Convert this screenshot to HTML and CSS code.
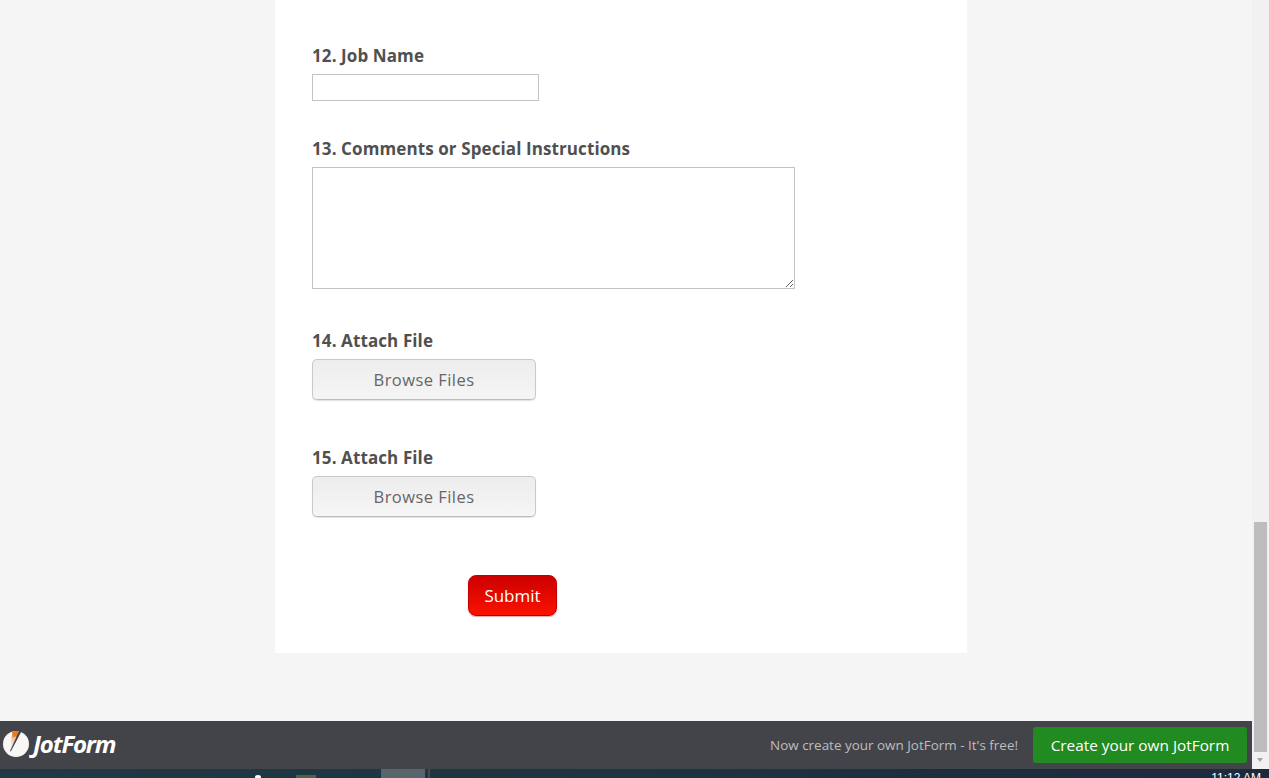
FILE: index.html
```html
<!DOCTYPE html>
<html lang="en">
<head>
<meta charset="utf-8">
<title>Form</title>
<link rel="stylesheet" href="styles.css">
</head>
<body>
<div class="window">
  <div class="viewport">
    <main class="page">
      <form class="card">
        <div class="field field-job">
          <label class="label">12. Job Name</label>
          <input class="text-input" type="text">
        </div>
        <div class="field field-comments">
          <label class="label">13. Comments or Special Instructions</label>
          <textarea class="textarea"></textarea>
        </div>
        <div class="field field-file">
          <label class="label">14. Attach File</label>
          <button class="browse" type="button">Browse Files</button>
        </div>
        <div class="field field-file2">
          <label class="label">15. Attach File</label>
          <button class="browse" type="button">Browse Files</button>
        </div>
        <div class="submit-row">
          <button class="submit" type="button">Submit</button>
        </div>
      </form>
    </main>
    <footer class="bar">
      <div class="brand">
        <svg class="logo" viewBox="0 0 28 28" width="28" height="28" aria-hidden="true">
          <defs>
            <linearGradient id="fade" x1="0.7" y1="0" x2="0.3" y2="1">
              <stop offset="0" stop-color="#e9b48a"/>
              <stop offset="0.6" stop-color="#efdfd2"/>
              <stop offset="1" stop-color="#f4efe9"/>
            </linearGradient>
          </defs>
          <circle cx="14" cy="14" r="13" fill="#f8f7f5"/>
          <path d="M16.500 6.500 L8.500 21 L9.500 6.500 Z" fill="url(#fade)"/>
          <path d="M10 1.500 C12 0.800 15 0.700 17 1.200 L15.500 7.800 L13 6.500 L10.500 7.800 Z" fill="#e8791c"/>
          <path d="M17.200 0.800 L19.500 1.300 L8.800 21.500 L8 21 Z" fill="#43444a"/>
        </svg>
        <span class="wordmark">JotForm</span>
      </div>
      <div class="promo">
        <span class="promo-text">Now create your own JotForm - It's free!</span>
        <a class="cta">Create your own JotForm</a>
      </div>
    </footer>
  </div>
  <div class="scrollbar">
    <div class="track"><div class="thumb"></div></div>
    <div class="arrow"></div>
  </div>
</div>
<div class="taskbar">
  <span class="task-dot"></span>
  <span class="task-tab"></span>
  <span class="task-active"></span>
  <span class="task-sep"></span>
  <span class="clock">11:12 AM</span>
</div>
</body>
</html>
```
FILE: styles.css
```css
* { box-sizing: border-box; }
html, body { margin: 0; height: 778px; overflow: hidden; }
body { font-family: "Open Sans", "Liberation Sans", sans-serif; background: #f5f5f5; display: flex; flex-direction: column; }
.window { display: flex; height: 769px; }
.viewport { width: 1252px; display: flex; flex-direction: column; }
.page { flex: 1; padding-left: 275px; }
.card { width: 692px; height: 653px; background: #fff; padding: 45px 0 0 37px; }
.field { display: flex; flex-direction: column; align-items: flex-start; }
.label { font-size: 17px; line-height: 20px; font-weight: 700; color: #505050; letter-spacing: .1px; padding-top: 1px; margin-bottom: 8px; }
.text-input { width: 227px; height: 27px; border: 1px solid #c4c4c4; background: #fff; padding: 0; }
.field-comments { margin-top: 37px; }
.textarea { width: 483px; height: 122px; border: 1px solid #c4c4c4; background: #fff; padding: 0; display: block; }
.field-file { margin-top: 41px; }
.field-file2 { margin-top: 47px; }
.browse { width: 224px; height: 41px; border: 1px solid #c9c9c9; border-bottom-color: #bdbdbd; border-radius: 5px; background: linear-gradient(#ededed, #f5f5f5); box-shadow: 0 1px 1px rgba(0,0,0,.12); font: 400 16.500px "Open Sans", sans-serif; color: #666; letter-spacing: .45px; padding: 0; }
.submit-row { margin-top: 58px; padding-left: 156px; }
.submit { width: 89px; height: 41px; border: 1px solid #c00000; border-radius: 8px; background: linear-gradient(#cc0000, #fb1200); box-shadow: 0 1px 1px rgba(160,0,0,.35); color: #fff; font: 400 17px "Open Sans", sans-serif; padding: 0; }
.bar { height: 48px; background: #43444a; display: flex; align-items: center; justify-content: space-between; padding: 0 5px 0 2px; }
.brand { display: flex; align-items: center; gap: 3px; margin-top: -3px; }
.logo { display: block; }
.wordmark { font-size: 24px; font-weight: 700; font-style: italic; color: #fff; letter-spacing: -1.150px; }
.promo { display: flex; align-items: center; gap: 15px; }
.promo-text { font-size: 13.450px; color: #bdbdbd; }
.cta { width: 214px; height: 36px; border-radius: 3px; background: #218a21; color: #fff; font-size: 15.350px; display: flex; align-items: center; justify-content: center; }
.scrollbar { width: 17px; background: #f1f1f1; display: flex; flex-direction: column; }
.track { flex: 1; display: flex; flex-direction: column; justify-content: flex-end; padding: 0 2px; }
.thumb { height: 230px; background: #bdbdbd; }
.arrow { height: 17px; position: relative; }
.arrow::after { content: ""; position: absolute; left: 5px; top: 6px; border: 3.500px solid transparent; border-top: 4px solid #a3a3a3; border-bottom: 0; }
.taskbar { height: 9px; background: linear-gradient(90deg, #1f3a44, #1e3540 40%, #1c2a3e); display: flex; position: relative; overflow: hidden; }
.task-dot { position: absolute; left: 255px; top: 6px; width: 6px; height: 4px; border-radius: 50%; background: #fff; }
.task-tab { position: absolute; left: 296px; top: 6px; width: 20px; height: 3px; background: #55604c; }
.task-active { position: absolute; left: 381px; top: 0; width: 44px; height: 9px; background: #56666c; }
.task-sep { position: absolute; left: 428px; top: 0; width: 2px; height: 9px; background: #3d4d55; }
.clock { position: absolute; right: 8px; top: 3px; font-size: 12px; line-height: 13px; color: #fff; font-family: "Liberation Sans", sans-serif; }
```
